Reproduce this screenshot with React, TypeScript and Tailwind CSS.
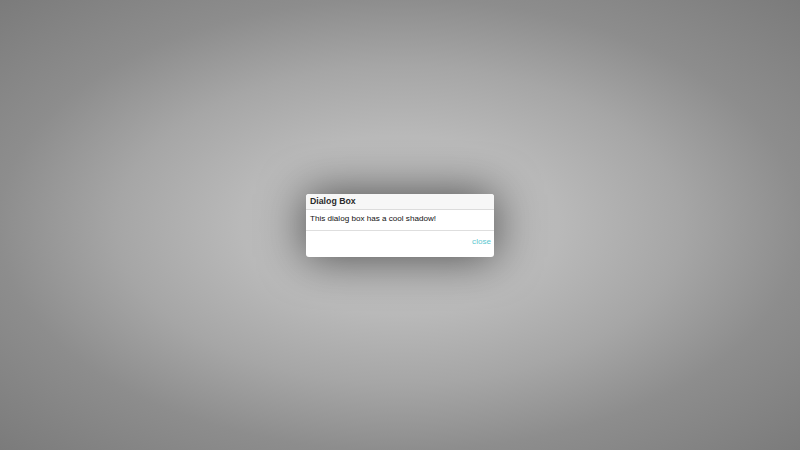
import React from "react";

export default function App() {
  return (
    <div
      className="w-full h-[450px] flex items-center justify-center bg-[radial-gradient(ellipse_at_center,#bdbdbd_0%,#b9b9b9_28%,#a6a6a6_50%,#8d8d8d_71%,#7b7b7b_100%)]"
      style={{ fontFamily: '"Liberation Sans", Arial, sans-serif' }}
    >
      <div className="w-[188px] h-[63px] flex flex-col bg-white rounded-[3px] overflow-hidden shadow-[0_0_45px_rgba(0,0,0,0.6)]">
        <div className="h-[16px] shrink-0 bg-[#f7f7f7] border-b border-[#dcdcdc] pl-[4px] flex items-center text-[8.75px] font-bold text-[#2a2a2a] leading-none">
          Dialog Box
        </div>
        <div className="h-[21px] shrink-0 border-b border-[#dedede] pl-[4px] flex items-center text-[8.1px] text-[#111] leading-none">
          This dialog box has a cool shadow!
        </div>
        <div className="flex-1 flex justify-end pr-[3px] pt-[6px]">
          <span className="text-[8.1px] leading-[10px] text-[#5cc8d0]">close</span>
        </div>
      </div>
    </div>
  );
}
